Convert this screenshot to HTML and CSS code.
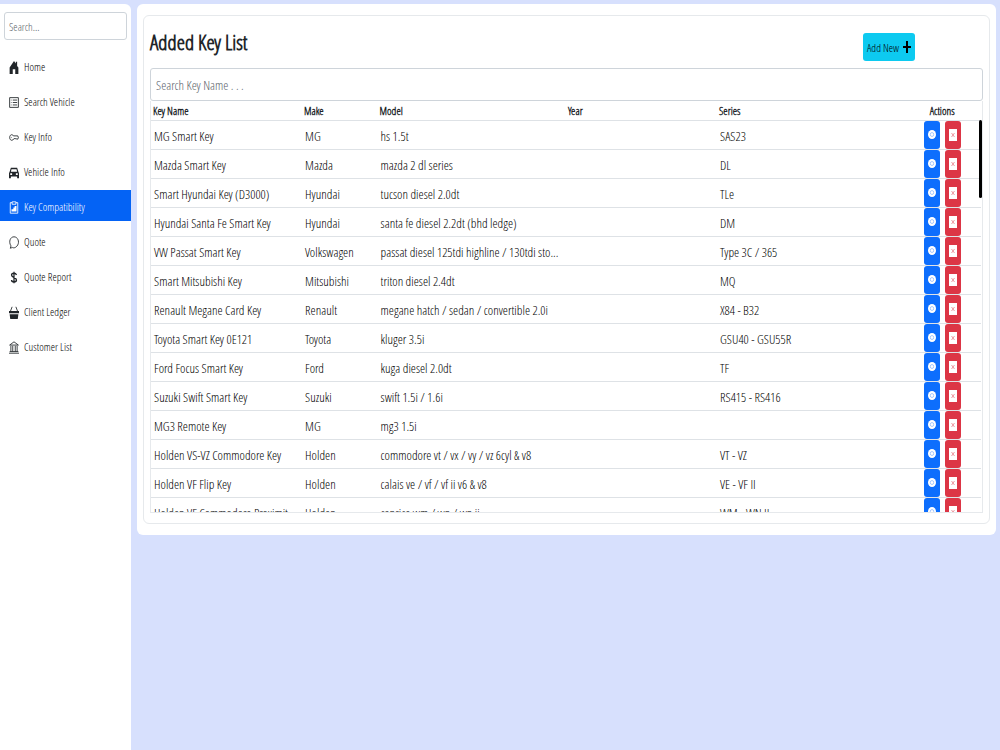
FILE: index.html
```html
<!doctype html>
<html lang="en">

<head>
	<meta charset="utf-8">
	<title>Added Key List</title>
	<meta name="viewport" content="width=device-width, initial-scale=1"/>
	<link rel="stylesheet" href="styles.css">
</head>

<body>
	<aside class="sidebar">
		<input type="search" class="menu-search" aria-label="Search menu" placeholder="Search...">
		<nav class="menu">
			<a href="#"><svg viewBox="0 0 16 16" preserveAspectRatio="none" aria-hidden="true"><path d="M8 0 1 8v8h5v-6h4v6h5V8l-2-2V1h-2v2z"/></svg>Home</a>
			<a href="#"><svg viewBox="0 0 16 16" preserveAspectRatio="none" aria-hidden="true"><path class="line" d="M1 2h14v12H1zM6 5h7M6 8h7M6 11h7M3 5h1M3 8h1M3 11h1"/></svg>Search Vehicle</a>
			<a href="#"><svg viewBox="0 0 16 16" preserveAspectRatio="none" aria-hidden="true"><path class="line" d="M7 6C5 3 1 5 1 8s4 5 6 2h1l1-1 1 1 1-1 1 1h2l1-2-1-2zM3 8h1"/></svg>Key Info</a>
			<a href="#"><svg viewBox="0 0 16 16" preserveAspectRatio="none" aria-hidden="true"><path fill-rule="evenodd" d="M3 2h10l2 5 1 2v6h-3v-2H3v2H0V9l1-2zM4 4 3 7h10l-1-3zM2 9v2h3V9zM11 9v2h3V9z"/></svg>Vehicle Info</a>
			<a href="#" class="active" aria-current="page"><svg viewBox="0 0 16 16" preserveAspectRatio="none" aria-hidden="true"><path class="line" d="M5 2H2v13h12V2h-3M5 1h6v3H5z"/><path d="M4 13v-3h3V8h2V6h3v7z"/></svg>Key Compatibility</a>
			<a href="#"><svg viewBox="0 0 16 16" preserveAspectRatio="none" aria-hidden="true"><path class="line" d="M2 15c1-1 1-2 1-3C-1 7 2 1 8 1s9 6 6 10-7 4-9 3c-1 .6-2 1-3 1z"/></svg>Quote</a>
			<a href="#"><svg viewBox="0 0 16 16" preserveAspectRatio="none" aria-hidden="true"><path class="line bold" d="M12 5c-1-3-8-3-8 0s8 3 8 6-8 3-8 0M8 1v14"/></svg>Quote Report</a>
			<a href="#"><svg viewBox="0 0 16 16" preserveAspectRatio="none" aria-hidden="true"><path d="M0 6h16v3H0zM1 10h14l-1 6H2z"/><path class="line" d="M2 7l3-6M14 7l-3-6"/></svg>Client Ledger</a>
			<a href="#"><svg viewBox="0 0 16 16" preserveAspectRatio="none" aria-hidden="true"><path class="line" d="M1 5l7-4 7 4zM3 6v7M6 6v7M10 6v7M13 6v7M1 13h14M0 15h16"/></svg>Customer List</a>
		</nav>
	</aside>

	<main class="panel">
		<section class="card">
			<header class="card-head">
				<h1>Added Key List</h1>
				<button type="button" class="add-btn">Add New <svg viewBox="0 0 8 12" aria-hidden="true"><path d="M3 0h2v5h3v2H5v5H3V7H0V5h3z"/></svg></button>
			</header>
			<input type="search" class="key-search" aria-label="Search key name" placeholder="Search Key Name . . .">
			<div class="table-wrap">
				<table>
					<colgroup>
						<col class="c-name"><col class="c-make"><col class="c-model"><col class="c-year"><col class="c-series"><col class="c-actions">
					</colgroup>
					<thead>
						<tr><th>Key Name</th><th>Make</th><th>Model</th><th>Year</th><th>Series</th><th>Actions</th></tr>
					</thead>
					<tbody id="keyRows"></tbody>
				</table>
				<div class="thumb"></div>
			</div>
		</section>
	</main>

	<script src="keys.js"></script>
</body></html>
```
FILE: styles.css
```css
* {
	box-sizing: border-box;
}

body {
	margin: 0;
	min-height: 100vh;
	display: flex;
	gap: 6px;
	padding: 4px 4px 0 0;
	background-color: #d7e0fd;
	font-family: "Open Sans Condensed Light", "Liberation Sans Narrow", "Noto Sans", sans-serif;
	font-size: 13px;
	color: #212529;
}

input, button {
	font: inherit;
	color: inherit;
}

input {
	border: 1px solid #ced4da;
	background-color: #fff;
	outline: 0;
}

input::placeholder {
	color: #5c646c;
	opacity: 1;
}

.sidebar {
	flex: none;
	width: 131px;
	background-color: #fff;
	border-radius: 0 6px 0 0;
}

.menu-search {
	display: block;
	width: 123px;
	height: 28px;
	margin: 8px 4px 10px;
	padding: 0 4px;
	border-radius: 3px;
	font-size: 11px;
}

.menu {
	display: flex;
	flex-direction: column;
	gap: 4px;
}

.menu a {
	display: flex;
	align-items: center;
	gap: 5px;
	height: 31px;
	padding: 2px 0 0 9px;
	font-size: 11px;
	color: #000;
	text-decoration: none;
}

.menu svg {
	width: 10px;
	height: 13px;
	margin-top: 2px;
	fill: #212529;
	stroke: #212529;
	stroke-width: 0;
}

.menu .line {
	fill: none;
	stroke-width: 1.2;
}

.menu .bold {
	stroke-width: 2;
}

.menu a.active {
	background-color: #0463f5;
	color: #fff;
}

.menu a.active svg {
	fill: #fff;
	stroke: #fff;
}

.panel {
	flex: 1;
	min-width: 0;
	align-self: flex-start;
	padding: 11px 6px;
	background-color: #fff;
	border-radius: 6px;
}

.card {
	padding: 0 6px 10px;
	border: 1px solid #e6e9ec;
	border-radius: 6px;
}

.card-head {
	display: flex;
	align-items: center;
	justify-content: space-between;
	height: 52px;
	padding-right: 68px;
}

h1 {
	margin: 0;
	font-size: 21px;
	font-weight: bold;
}

.add-btn {
	display: flex;
	align-items: center;
	gap: 4px;
	height: 28px;
	margin-top: 10px;
	padding: 0 4px;
	border: 0;
	border-radius: 3px;
	background-color: #0dcaf0;
	font-size: 11px;
	color: #000;
}

.add-btn svg {
	width: 8px;
	height: 12px;
}

.key-search {
	display: block;
	width: 100%;
	height: 33px;
	padding: 0 5px;
	border-radius: 3px;
}

.table-wrap {
	position: relative;
	height: 412px;
	padding-right: 1px;
	overflow: hidden;
	border: 1px solid #e6e9ec;
	border-top: 0;
}

table {
	width: 100%;
	table-layout: fixed;
	border-collapse: collapse;
}

.c-name { width: 18.2%; }
.c-make { width: 9.1%; }
.c-model { width: 22.7%; }
.c-year { width: 18.2%; }
.c-series { width: 24.9%; }

th {
	height: 19px;
	padding: 2px 2px 0;
	border-bottom: 1px solid #dee2e6;
	text-align: left;
	font-size: 11px;
	line-height: 16px;
}

th:last-child {
	padding-left: 6px;
}

td {
	height: 29px;
	padding: 2px 3px 0;
	border-bottom: 1px solid #dee2e6;
	line-height: 26px;
	white-space: nowrap;
	color: #000;
}

td:last-child {
	padding: 0;
}

.actions {
	display: flex;
	gap: 5px;
}

.actions button {
	display: flex;
	align-items: center;
	justify-content: center;
	width: 16px;
	height: 28px;
	padding: 0;
	border: 0;
	border-radius: 3px;
	background-color: #0d6efd;
}

.actions .delete {
	background-color: #dc3545;
}

.actions svg {
	width: 8px;
	height: 12px;
}

.thumb {
	position: absolute;
	top: 19px;
	right: 0;
	width: 3px;
	height: 78px;
	border-radius: 2px;
	background-color: #000;
}
```
FILE: keys.js
```js
const keys = [
	["MG Smart Key", "MG", "hs 1.5t", "SAS23"],
	["Mazda Smart Key", "Mazda", "mazda 2 dl series", "DL"],
	["Smart Hyundai Key (D3000)", "Hyundai", "tucson diesel 2.0dt", "TLe"],
	["Hyundai Santa Fe Smart Key", "Hyundai", "santa fe diesel 2.2dt (bhd ledge)", "DM"],
	["VW Passat Smart Key", "Volkswagen", "passat diesel 125tdi highline / 130tdi sto...", "Type 3C / 365"],
	["Smart Mitsubishi Key", "Mitsubishi", "triton diesel 2.4dt", "MQ"],
	["Renault Megane Card Key", "Renault", "megane hatch / sedan / convertible 2.0i", "X84 - B32"],
	["Toyota Smart Key 0E121", "Toyota", "kluger 3.5i", "GSU40 - GSU55R"],
	["Ford Focus Smart Key", "Ford", "kuga diesel 2.0dt", "TF"],
	["Suzuki Swift Smart Key", "Suzuki", "swift 1.5i / 1.6i", "RS415 - RS416"],
	["MG3 Remote Key", "MG", "mg3 1.5i", ""],
	["Holden VS-VZ Commodore Key", "Holden", "commodore vt / vx / vy / vz 6cyl & v8", "VT - VZ"],
	["Holden VF Flip Key", "Holden", "calais ve / vf / vf ii v6 & v8", "VE - VF II"],
	["Holden VF Commodore Proximit", "Holden", "caprice wm / wn / wn ii", "WM - WN II"]
];

const actions = `<div class="actions">
	<button type="button" aria-label="View"><svg viewBox="0 0 8 12"><ellipse cx="4" cy="5.5" rx="4" ry="4.5" fill="#fff"/><ellipse cx="4" cy="5.5" rx="1.7" ry="2" fill="none" stroke="#7fb1fe" stroke-width=".7"/></svg></button>
	<button type="button" class="delete" aria-label="Delete"><svg viewBox="0 0 8 12"><path d="M0 0h8v12H0z" fill="#fff"/><path d="M2.500 4l3 4M5.500 4l-3 4" fill="none" stroke="#e8808a" stroke-width=".8"/></svg></button>
</div>`;

for (const [name, make, model, series] of keys) {
	const row = keyRows.insertRow();
	for (const text of [name, make, model, "", series]) row.insertCell().textContent = text;
	row.insertCell().innerHTML = actions;
}
```
